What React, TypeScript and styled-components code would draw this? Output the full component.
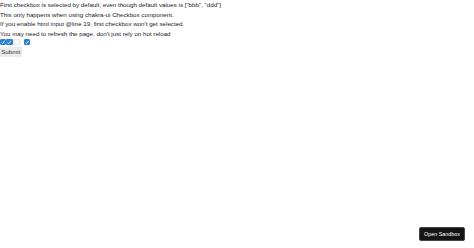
import React from 'react'
import styled, { createGlobalStyle } from 'styled-components'

const GlobalStyle = createGlobalStyle`
  html, body {
    margin: 0;
    padding: 0;
    background: #ffffff;
  }
  body {
    font-family: "Liberation Sans", Arial, sans-serif;
    font-size: 6.2px;
    line-height: 9.6px;
    color: #1a202c;
  }
`

const Page = styled.div`
  height: 248px;
  position: relative;
`

const Line = styled.div`
  white-space: nowrap;
`

const BoxRow = styled.div`
  display: flex;
  align-items: center;
  height: 7.6px;
`

const Box = styled.span<{ checked: boolean; gap: number }>`
  display: inline-flex;
  align-items: center;
  justify-content: center;
  width: 6.4px;
  height: 6.4px;
  box-sizing: border-box;
  margin-right: ${p => p.gap}px;
  border-radius: 1px;
  border: 0.8px solid ${p => (p.checked ? '#3182ce' : '#e2e8f0')};
  background: ${p => (p.checked ? '#3182ce' : '#ffffff')};
`

const SubmitButton = styled.button`
  display: block;
  font-family: "Liberation Sans", Arial, sans-serif;
  font-size: 6.2px;
  line-height: 9.6px;
  height: 10px;
  color: #2d3748;
  background: #ececec;
  border: none;
  border-radius: 0;
  padding: 0 1.2px;
  margin: 0;
  margin-top: 1px;
`

const SandboxButton = styled.button`
  position: absolute;
  right: 9px;
  bottom: 7px;
  height: 14px;
  padding: 0 4px;
  background: #151515;
  color: #ffffff;
  font-family: "Liberation Sans", Arial, sans-serif;
  font-size: 5.4px;
  border: 0.5px solid #444;
  border-radius: 2px;
`

const Check: React.FC<{ checked: boolean; gap: number }> = ({ checked, gap }) => (
  <Box checked={checked} gap={gap}>
    {checked && (
      <svg width="4.4" height="4.4" viewBox="0 0 12 10">
        <polyline points="1.5 6 4.5 9 10.5 1" fill="none" stroke="#fff" strokeWidth="2" />
      </svg>
    )}
  </Box>
)

export default function App() {
  return (
    <Page>
      <GlobalStyle />
      <Line>First checkbox is selected by default, even though default values is ["bbb", "ddd"]</Line>
      <Line>This only happens when using chakra-ui Checkbox component.</Line>
      <Line>If you enable html input @line 19, first checkbox won't get selected.</Line>
      <Line>You may need to refresh the page, don't just rely on hot reload</Line>
      <BoxRow>
        <Check checked gap={0} />
        <Check checked gap={0.4} />
        <Check checked={false} gap={4.4} />
        <Check checked gap={0} />
      </BoxRow>
      <SubmitButton>Submit</SubmitButton>
      <SandboxButton>Open Sandbox</SandboxButton>
    </Page>
  )
}
